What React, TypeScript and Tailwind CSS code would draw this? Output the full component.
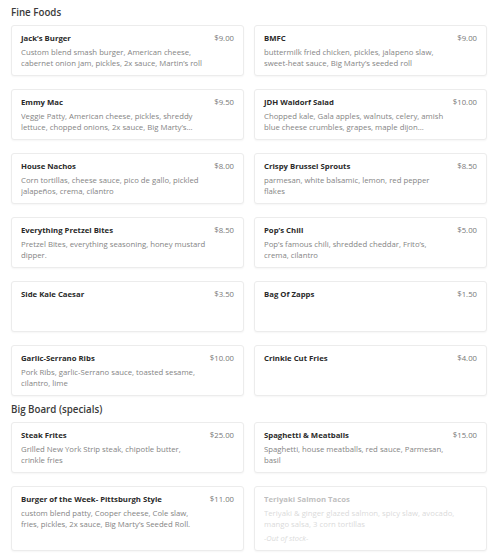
type Item = {
  name: string;
  price: string;
  desc?: string;
  soldOut?: boolean;
};

const fineFoods: Item[] = [
  { name: "Jack’s Burger", price: "$9.00", desc: "Custom blend smash burger, American cheese, cabernet onion jam, pickles, 2x sauce, Martin’s roll" },
  { name: "BMFC", price: "$9.00", desc: "buttermilk fried chicken, pickles, jalapeno slaw, sweet-heat sauce, Big Marty’s seeded roll" },
  { name: "Emmy Mac", price: "$9.50", desc: "Veggie Patty, American cheese, pickles, shreddy lettuce, chopped onions, 2x sauce, Big Marty’s seeded roll" },
  { name: "JDH Waldorf Salad", price: "$10.00", desc: "Chopped kale, Gala apples, walnuts, celery, amish blue cheese crumbles, grapes, maple dijon vinaigrette" },
  { name: "House Nachos", price: "$8.00", desc: "Corn tortillas, cheese sauce, pico de gallo, pickled jalapeños, crema, cilantro" },
  { name: "Crispy Brussel Sprouts", price: "$8.50", desc: "parmesan, white balsamic, lemon, red pepper flakes" },
  { name: "Everything Pretzel Bites", price: "$8.50", desc: "Pretzel Bites, everything seasoning, honey mustard dipper." },
  { name: "Pop’s Chill", price: "$5.00", desc: "Pop’s famous chili, shredded cheddar, Frito’s, crema, cilantro" },
  { name: "Side Kale Caesar", price: "$3.50" },
  { name: "Bag Of Zapps", price: "$1.50" },
  { name: "Garlic-Serrano Ribs", price: "$10.00", desc: "Pork Ribs, garlic-Serrano sauce, toasted sesame, cilantro, lime" },
  { name: "Crinkle Cut Fries", price: "$4.00" },
];

const bigBoard: Item[] = [
  { name: "Steak Frites", price: "$25.00", desc: "Grilled New York Strip steak, chipotle butter, crinkle fries" },
  { name: "Spaghetti & Meatballs", price: "$15.00", desc: "Spaghetti, house meatballs, red sauce, Parmesan, basil" },
  { name: "Burger of the Week- Pittsburgh Style", price: "$11.00", desc: "custom blend patty, Cooper cheese, Cole slaw, fries, pickles, 2x sauce, Big Marty’s Seeded Roll." },
  { name: "Teriyaki Salmon Tacos", price: "", desc: "Teriyaki & ginger glazed salmon, spicy slaw, avocado, mango salsa, 3 corn tortillas", soldOut: true },
];

function MenuCard({ item }: { item: Item }) {
  return (
    <div className="min-h-[51px] rounded-[3px] border border-[#ececec] bg-white px-[9px] pt-[6px] pb-[7px] shadow-[0_1px_2px_rgba(0,0,0,0.04)]">
      <div className={item.soldOut ? "opacity-30" : ""}>
        <div className="flex items-start gap-[7px]">
          <div className="min-w-0 flex-1">
            <div className="text-[7.75px] font-bold leading-[12px] text-[#2a2a2a]">{item.name}</div>
            {item.desc && (
              <div className="mt-[3px] line-clamp-2 text-[7.75px] leading-[10.5px] text-[#858585]">{item.desc}</div>
            )}
          </div>
          {item.price && (
            <div className="shrink-0 text-[7.75px] leading-[12px] text-[#777777]">{item.price}</div>
          )}
        </div>
        {item.soldOut && (
          <div className="mt-[4px] text-[7.5px] italic leading-[10px] text-[#858585]">-Out of stock-</div>
        )}
      </div>
    </div>
  );
}

function Section({ title, items, className }: { title: string; items: Item[]; className?: string }) {
  return (
    <section className={className}>
      <h2 className="mb-[4px] text-[9.75px] font-semibold leading-[16px] text-[#3a3a3a]">{title}</h2>
      <div className="grid grid-cols-2 gap-x-[10px] gap-y-[13px]">
        {items.map((it) => (
          <MenuCard key={it.name} item={it} />
        ))}
      </div>
    </section>
  );
}

export default function App() {
  return (
    <div className="min-h-[554px] bg-white pl-[11px] pr-[13px] pt-[5px] font-['Open_Sans','Noto_Sans',sans-serif]">
      <Section title="Fine Foods" items={fineFoods} />
      <Section title="Big Board (specials)" items={bigBoard} className="mt-[6px]" />
    </div>
  );
}
